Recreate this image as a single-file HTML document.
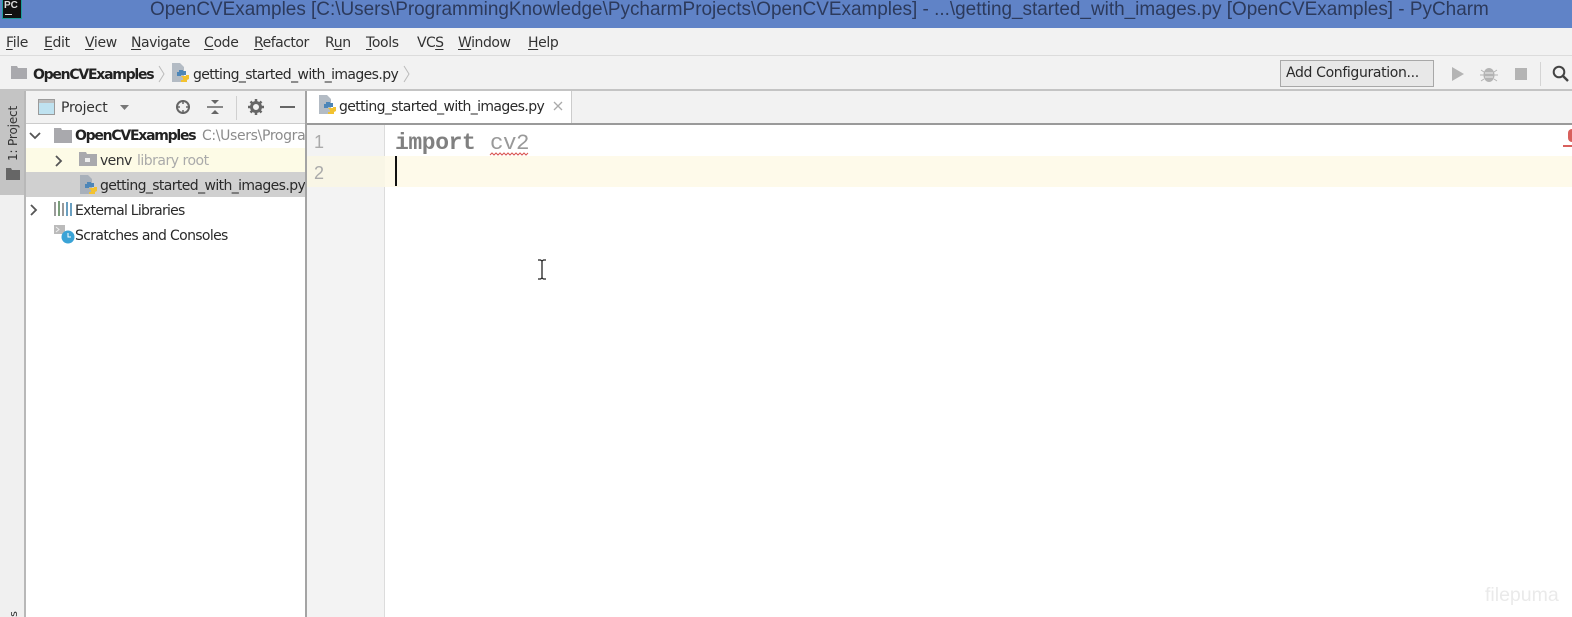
<!DOCTYPE html>
<html><head><meta charset="utf-8">
<style>
html,body{margin:0;padding:0;background:#fff}
#p{position:relative;width:1572px;height:617px;overflow:hidden;background:#fff;font-family:"DejaVu Sans","Liberation Sans",sans-serif;color:#2a2a2a;filter:blur(.35px)}
.a{position:absolute;white-space:nowrap}
.m{top:34px;font-size:14px;line-height:18px;color:#333}
.m u{text-underline-offset:2px}
svg{position:absolute;overflow:visible}
.t{font-size:14px;line-height:18px;letter-spacing:-.35px}
</style></head><body><div id="p">
<div class="a" style="left:0;top:0;width:1572px;height:28px;background:#6083c7"></div>
<div class="a" style="left:150px;top:-4px;font:18.96px/28px 'Liberation Sans',sans-serif;color:#2c3a5c">OpenCVExamples [C:\Users\ProgrammingKnowledge\PycharmProjects\OpenCVExamples] - ...\getting_started_with_images.py [OpenCVExamples] - PyCharm</div>
<div class="a" style="left:2px;top:0;width:18px;height:18px;background:#111;border:1px solid #1f9a9a;border-top:0"></div>
<div class="a" style="left:4px;top:0;font:bold 10px/11px 'Liberation Sans',sans-serif;color:#ddd">PC</div>
<div class="a" style="left:5px;top:14px;width:7px;height:1px;background:#ddd"></div>

<div class="a" style="left:0;top:28px;width:1572px;height:27px;background:#f2f2f2"></div>
<div class="a m t" style="left:6px"><u>F</u>ile</div>
<div class="a m t" style="left:44px"><u>E</u>dit</div>
<div class="a m t" style="left:85px"><u>V</u>iew</div>
<div class="a m t" style="left:131px;letter-spacing:-.5px"><u>N</u>avigate</div>
<div class="a m t" style="left:204px"><u>C</u>ode</div>
<div class="a m t" style="left:254px;letter-spacing:-.5px"><u>R</u>efactor</div>
<div class="a m t" style="left:325px">R<u>u</u>n</div>
<div class="a m t" style="left:366px"><u>T</u>ools</div>
<div class="a m t" style="left:417px;letter-spacing:-.6px">VC<u>S</u></div>
<div class="a m t" style="left:458px;letter-spacing:-.45px"><u>W</u>indow</div>
<div class="a m t" style="left:528px;letter-spacing:-.4px"><u>H</u>elp</div>

<div class="a" style="left:0;top:55px;width:1572px;height:36px;background:#f2f2f2;border-top:1px solid #dcdcdc;box-sizing:border-box;border-bottom:2px solid #c4c4c4"></div>
<svg style="left:11px;top:66px" width="16" height="13"><path d="M0 0h6l1 2h9v11H0z" fill="#a9a9ad"/></svg>
<div class="a t" style="left:33px;top:66px;font-weight:bold;letter-spacing:-1.25px;color:#222">OpenCVExamples</div>
<svg style="left:158px;top:65px" width="8" height="20"><path d="M1 1l5 8-5 8" fill="none" stroke="#bbb" stroke-width="1"/></svg>
<svg style="left:172px;top:63px" width="18" height="20"><path d="M0 0h8l4 4v15H0z" fill="#b3bbc4"/><path d="M7 7h4v1h3v4H9v1H5V9h2z" fill="#4d86b8"/><path d="M9 13h5v-1h3v4l-2 1v2H9v-2h2v-2z" fill="#f2c230"/></svg>
<div class="a t" style="left:193px;top:66px;letter-spacing:-.61px">getting_started_with_images.py</div>
<svg style="left:403px;top:65px" width="8" height="20"><path d="M1 1l5 8-5 8" fill="none" stroke="#bbb" stroke-width="1"/></svg>
<div class="a t" style="left:1280px;top:60px;width:154px;height:27px;box-sizing:border-box;background:#e8e8e8;border:1px solid #a8a8a8;padding:3px 0 0 5px;letter-spacing:-.35px">Add Configuration...</div>
<svg style="left:1451px;top:66px" width="14" height="16"><path d="M1 1l12 7-12 7z" fill="#b4b4b4"/></svg>
<svg style="left:1480px;top:66px" width="18" height="17"><ellipse cx="9" cy="9" rx="5.5" ry="7" fill="#b4b4b4"/><path d="M1 4l3 2M17 4l-3 2M0 9h4M14 9h4M1 15l3-2M17 15l-3-2" stroke="#b4b4b4"/><path d="M5 7h8M5 11h8" stroke="#eee"/></svg>
<div class="a" style="left:1515px;top:68px;width:12px;height:12px;background:#b4b4b4"></div>
<div class="a" style="left:1540px;top:62px;width:1px;height:24px;background:#d4d4d4"></div>
<svg style="left:1552px;top:65px" width="18" height="18"><circle cx="7" cy="7" r="5.3" fill="none" stroke="#444" stroke-width="2"/><path d="M11 11l5 5" stroke="#444" stroke-width="2.4"/></svg>

<div class="a" style="left:0;top:91px;width:26px;height:526px;background:#f0f0f0;border-right:2px solid #b8b8b8;box-sizing:border-box"></div>
<div class="a" style="left:0;top:91px;width:24px;height:104px;background:#c4c4c4"></div>
<div class="a" style="left:5px;top:161px;font-size:12px;line-height:16px;transform-origin:0 0;transform:rotate(-90deg);letter-spacing:-.15px;color:#333">1: Project</div>
<svg style="left:6px;top:168px" width="14" height="12"><path d="M0 0h5l1 2h8v10H0z" fill="#666"/></svg>

<div class="a" style="left:26px;top:91px;width:280px;height:33px;background:#f2f2f2;border-bottom:1px solid #ccc;box-sizing:border-box"></div>
<svg style="left:38px;top:99px" width="17" height="16"><rect x=".5" y=".5" width="16" height="15" fill="#bfe2f0" stroke="#9a9a9a"/><rect x="1" y="1" width="15" height="3" fill="#bdbdbd"/></svg>
<div class="a t" style="left:61px;top:99px;letter-spacing:-.2px;color:#333">Project</div>
<svg style="left:120px;top:105px" width="10" height="6"><path d="M0 0h9L4.500 5z" fill="#777"/></svg>
<svg style="left:175px;top:99px" width="16" height="16"><circle cx="8" cy="8" r="6" fill="none" stroke="#666" stroke-width="2"/><path d="M8 1v4M8 11v4M1 8h4M11 8h4" stroke="#666" stroke-width="1.500"/></svg>
<svg style="left:207px;top:99px" width="16" height="16"><path d="M0 8h16" stroke="#666" stroke-width="1.500"/><path d="M4 1h8L8 5zM4 15h8L8 11z" fill="#666"/></svg>
<div class="a" style="left:236px;top:96px;width:1px;height:24px;background:#d0d0d0"></div>
<svg style="left:248px;top:99px" width="16" height="16"><circle cx="8" cy="8" r="4.500" fill="none" stroke="#666" stroke-width="3"/><path d="M8 0v3M8 13v3M0 8h3M13 8h3M2.500 2.500l2 2M11.500 11.500l2 2M2.500 13.500l2-2M11.500 4.500l2-2" stroke="#666" stroke-width="2.500"/></svg>
<div class="a" style="left:280px;top:106px;width:15px;height:2px;background:#666"></div>

<div class="a" style="left:26px;top:148px;width:280px;height:24px;background:#fdfbe6"></div>
<div class="a" style="left:26px;top:172px;width:280px;height:25px;background:#d0d0d0"></div>
<svg style="left:29px;top:132px" width="12" height="8"><path d="M1 1l5 5 5-5" fill="none" stroke="#555" stroke-width="1.800"/></svg>
<svg style="left:54px;top:128px" width="18" height="15"><path d="M0 0h7l1 2h10v13H0z" fill="#a9a9ad"/></svg>
<div class="a t" style="left:75px;top:127px;font-weight:bold;letter-spacing:-1.25px;color:#222">OpenCVExamples</div>
<div class="a t" style="left:202px;top:127px;width:103px;overflow:hidden;color:#8c8c8c;letter-spacing:-.35px">C:\Users\Progra</div>
<svg style="left:55px;top:155px" width="8" height="12"><path d="M1 1l5 5-5 5" fill="none" stroke="#555" stroke-width="1.800"/></svg>
<svg style="left:79px;top:152px" width="18" height="14"><path d="M0 0h7l1 2h10v12H0z" fill="#a9a9ad"/><rect x="6" y="6" width="5" height="4" fill="#eee"/></svg>
<div class="a t" style="left:100px;top:152px;color:#333;letter-spacing:-.6px">venv</div>
<div class="a t" style="left:137px;top:152px;color:#aaa;letter-spacing:-.5px">library root</div>
<svg style="left:80px;top:175px" width="18" height="20"><path d="M0 0h8l4 4v15H0z" fill="#a8b0ba"/><path d="M7 7h4v1h3v4H9v1H5V9h2z" fill="#4d86b8"/><path d="M9 13h5v-1h3v4l-2 1v2H9v-2h2v-2z" fill="#f2c230"/></svg>
<div class="a t" style="left:100px;top:177px;letter-spacing:-.61px">getting_started_with_images.py</div>
<svg style="left:30px;top:204px" width="8" height="12"><path d="M1 1l5 5-5 5" fill="none" stroke="#555" stroke-width="1.800"/></svg>
<svg style="left:54px;top:201px" width="18" height="16"><path d="M1 1v14" stroke="#999" stroke-width="2"/><path d="M5 0v15" stroke="#7a9e7a" stroke-width="2"/><path d="M9 2v13" stroke="#999" stroke-width="2"/><path d="M13 1v14M17 2v13" stroke="#6a9fc0" stroke-width="2"/></svg>
<div class="a t" style="left:75px;top:202px;letter-spacing:-.75px">External Libraries</div>
<svg style="left:54px;top:225px" width="20" height="20"><rect x="0" y="0" width="11" height="9" fill="#bbb"/><path d="M2 2l3 2.500-3 2.500" fill="none" stroke="#eee"/><circle cx="14" cy="12" r="6.500" fill="#3aa3d6"/><path d="M14 8v4h3" stroke="#fff" fill="none"/></svg>
<div class="a t" style="left:75px;top:227px;letter-spacing:-.65px">Scratches and Consoles</div>

<div class="a" style="left:305px;top:91px;width:1267px;height:33px;background:#f2f2f2"></div>
<div class="a" style="left:307px;top:91px;width:265px;height:32px;background:#fff;border-right:1px solid #ccc;box-sizing:border-box"></div>
<div class="a" style="left:306px;top:123px;width:1266px;height:2px;background:#9a9a9a"></div>
<div class="a" style="left:305px;top:91px;width:2px;height:526px;background:#a4a4a4"></div>
<svg style="left:319px;top:95px" width="18" height="20"><path d="M0 0h8l4 4v15H0z" fill="#b3bbc4"/><path d="M7 7h4v1h3v4H9v1H5V9h2z" fill="#4d86b8"/><path d="M9 13h5v-1h3v4l-2 1v2H9v-2h2v-2z" fill="#f2c230"/></svg>
<div class="a t" style="left:339px;top:98px;letter-spacing:-.61px">getting_started_with_images.py</div>
<svg style="left:553px;top:101px" width="10" height="10"><path d="M1 1l8 8M9 1l-8 8" stroke="#aaa" stroke-width="1.300"/></svg>

<div class="a" style="left:307px;top:125px;width:78px;height:492px;background:#f3f3f3;border-right:1px solid #dcdcdc;box-sizing:border-box"></div>
<div class="a" style="left:307px;top:156px;width:1265px;height:31px;background:#fefaea"></div>
<div class="a" style="left:307px;top:156px;width:78px;height:31px;background:#f9f6e6"></div>
<div class="a" style="left:314px;top:131px;font:18px/22px 'Liberation Sans',sans-serif;color:#aaa">1</div>
<div class="a" style="left:314px;top:162px;font:18px/22px 'Liberation Sans',sans-serif;color:#aaa">2</div>
<div class="a" style="left:395px;top:131px;font:bold 23px/24px 'Liberation Mono',monospace;color:#808080;letter-spacing:-.4px">import</div>
<div class="a" style="left:490px;top:131px;font:22.500px/24px 'Liberation Mono',monospace;color:#999;letter-spacing:-.5px">cv2</div>
<svg style="left:490px;top:152px" width="40" height="4"><path d="M0 3l2-2 2 2 2-2 2 2 2-2 2 2 2-2 2 2 2-2 2 2 2-2 2 2 2-2 2 2 2-2 2 2 2-2 2 2 2-2" fill="none" stroke="#d9534f" stroke-width="1"/></svg>
<div class="a" style="left:395px;top:156px;width:2px;height:30px;background:#111"></div>
<div class="a" style="left:1568px;top:129px;width:8px;height:13px;border-radius:4px;background:#d8605c"></div>
<div class="a" style="left:1563px;top:145px;width:9px;height:2px;background:#d8605c"></div>

<svg style="left:537px;top:259px" width="10" height="21"><path d="M1 1h2.500l1.500 1 1.500-1H9M1 20h2.500l1.500-1 1.500 1H9M5 2v17" fill="none" stroke="#222" stroke-width="1.300"/></svg>
<div class="a" style="left:1485px;top:583px;font:19.500px/24px 'Liberation Sans',sans-serif;color:#eaeaea">filepuma</div>
<div class="a" style="left:11px;top:609px;font-size:11px;line-height:10px;color:#333;transform:rotate(-90deg)">s</div>
</div></body></html>
